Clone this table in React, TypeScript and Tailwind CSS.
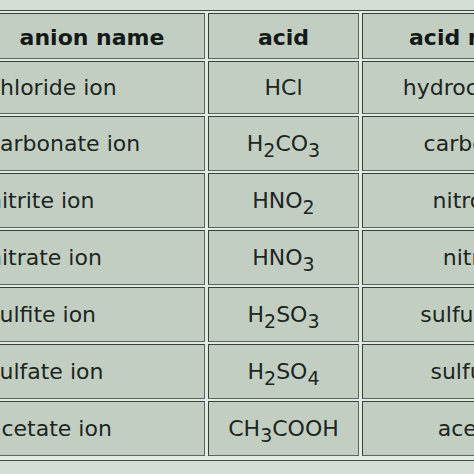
const rows: { anion: string; acid: React.ReactNode; name: string }[] = [
  { anion: 'chloride ion', acid: 'HCl', name: 'hydrochloric acid' },
  { anion: 'carbonate ion', acid: <>H<Sub>2</Sub>CO<Sub>3</Sub></>, name: 'carbonic acid' },
  { anion: 'nitrite ion', acid: <>HNO<Sub>2</Sub></>, name: 'nitrous acid' },
  { anion: 'nitrate ion', acid: <>HNO<Sub>3</Sub></>, name: 'nitric acid' },
  { anion: 'sulfite ion', acid: <>H<Sub>2</Sub>SO<Sub>3</Sub></>, name: 'sulfurous acid' },
  { anion: 'sulfate ion', acid: <>H<Sub>2</Sub>SO<Sub>4</Sub></>, name: 'sulfuric acid' },
  { anion: 'acetate ion', acid: <>CH<Sub>3</Sub>COOH</>, name: 'acetic acid' },
];

function Sub({ children }: { children: React.ReactNode }) {
  return <span className="relative top-[7px] text-[19px] leading-none">{children}</span>;
}

const cell =
  'flex items-center border border-t-[#34423a] border-l-[#34423a] border-r-[#59675e] border-b-[#59675e] bg-[#c3cec3]';

export default function App() {
  return (
    <div
      className="w-[474px] h-[474px] overflow-hidden bg-[#d5ded5] text-[22px] leading-[26px] text-[#1b2621]"
      style={{ fontFamily: '"DejaVu Sans", Verdana, sans-serif' }}
    >
      <div className="ml-[-24px] mt-[10px] grid w-[662px] grid-cols-[226px_151px_270px] gap-x-[3px] gap-y-[2px] border border-[#3d4b43] bg-[#e3eae3] px-[2px] pt-[2px] pb-[4px]">
        {/* header */}
        <div className={`${cell} h-[46px] justify-center pt-[3px] font-bold text-[#141a17]`}>anion name</div>
        <div className={`${cell} h-[46px] justify-center pt-[3px] font-bold text-[#141a17]`}>acid</div>
        <div className={`${cell} h-[46px] pl-[46px] pt-[3px] font-bold text-[#141a17]`}>acid name</div>

        {rows.map((r, i) => (
          <div key={r.anion} className="contents">
            <div className={`${cell} ${i === 0 ? 'h-[53px]' : 'h-[55px]'} pl-[8px]`}>{r.anion}</div>
            <div className={`${cell} ${i === 0 ? 'h-[53px]' : 'h-[55px]'} justify-center`}>{r.acid}</div>
            <div className={`${cell} ${i === 0 ? 'h-[53px]' : 'h-[55px]'} justify-center`}>{r.name}</div>
          </div>
        ))}
      </div>
    </div>
  );
}
